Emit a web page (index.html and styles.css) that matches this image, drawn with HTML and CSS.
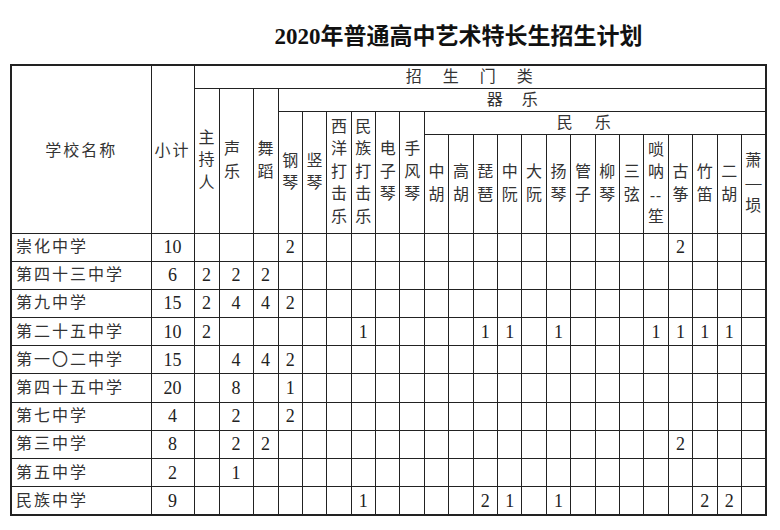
FILE: index.html
```html
<!DOCTYPE html>
<html lang="zh">
<head>
<meta charset="utf-8">
<title>2020年普通高中艺术特长生招生计划</title>
<link rel="stylesheet" href="styles.css">
</head>
<body>
<div class="title">2020年普通高中艺术特长生招生计划</div>
<table class="plan">
<colgroup>
<col class="c-name"><col class="c-sub"><col class="c-host"><col class="c-voc"><col class="c-dance">
<col class="c-ins"><col class="c-ins"><col class="c-ins"><col class="c-ins"><col class="c-ins"><col class="c-ins"><col class="c-ins"><col class="c-ins"><col class="c-ins"><col class="c-ins">
<col class="c-ins"><col class="c-ins"><col class="c-ins"><col class="c-ins"><col class="c-ins"><col class="c-ins"><col class="c-ins"><col class="c-ins"><col class="c-ins"><col class="c-ins">
</colgroup>
<thead>
<tr class="h1">
<th rowspan="4" class="spaced">学校名称</th>
<th rowspan="4" class="spaced">小计</th>
<th colspan="23" class="cat">招生门类</th>
</tr>
<tr class="h2">
<th rowspan="3" class="v">主<br>持<br>人</th>
<th rowspan="3" class="v voc">声<br>乐</th>
<th rowspan="3" class="v">舞<br>蹈</th>
<th colspan="20" class="qi">器乐</th>
</tr>
<tr class="h3">
<th rowspan="2" class="v">钢<br>琴</th>
<th rowspan="2" class="v">竖<br>琴</th>
<th rowspan="2" class="v">西<br>洋<br>打<br>击<br>乐</th>
<th rowspan="2" class="v">民<br>族<br>打<br>击<br>乐</th>
<th rowspan="2" class="v">电<br>子<br>琴</th>
<th rowspan="2" class="v">手<br>风<br>琴</th>
<th colspan="14" class="min">民乐</th>
</tr>
<tr class="h4">
<th class="v">中<br>胡</th>
<th class="v">高<br>胡</th>
<th class="v">琵<br>琶</th>
<th class="v">中<br>阮</th>
<th class="v">大<br>阮</th>
<th class="v">扬<br>琴</th>
<th class="v">管<br>子</th>
<th class="v">柳<br>琴</th>
<th class="v">三<br>弦</th>
<th class="v">唢<br>呐<br><span class="dd">--</span><br>笙</th>
<th class="v">古<br>筝</th>
<th class="v">竹<br>笛</th>
<th class="v">二<br>胡</th>
<th class="v">萧<br>—<br>埙</th>
</tr>
</thead>
<tbody>
<tr><td class="name">崇化中学</td><td>10</td><td></td><td></td><td></td><td>2</td><td></td><td></td><td></td><td></td><td></td><td></td><td></td><td></td><td></td><td></td><td></td><td></td><td></td><td></td><td></td><td>2</td><td></td><td></td><td></td></tr>
<tr><td class="name">第四十三中学</td><td>6</td><td>2</td><td>2</td><td>2</td><td></td><td></td><td></td><td></td><td></td><td></td><td></td><td></td><td></td><td></td><td></td><td></td><td></td><td></td><td></td><td></td><td></td><td></td><td></td><td></td></tr>
<tr><td class="name">第九中学</td><td>15</td><td>2</td><td>4</td><td>4</td><td>2</td><td></td><td></td><td></td><td></td><td></td><td></td><td></td><td></td><td></td><td></td><td></td><td></td><td></td><td></td><td></td><td></td><td></td><td></td><td></td></tr>
<tr><td class="name">第二十五中学</td><td>10</td><td>2</td><td></td><td></td><td></td><td></td><td></td><td>1</td><td></td><td></td><td></td><td></td><td>1</td><td>1</td><td></td><td>1</td><td></td><td></td><td></td><td>1</td><td>1</td><td>1</td><td>1</td><td></td></tr>
<tr><td class="name">第一〇二中学</td><td>15</td><td></td><td>4</td><td>4</td><td>2</td><td></td><td></td><td></td><td></td><td></td><td></td><td></td><td></td><td></td><td></td><td></td><td></td><td></td><td></td><td></td><td></td><td></td><td></td><td></td></tr>
<tr><td class="name">第四十五中学</td><td>20</td><td></td><td>8</td><td></td><td>1</td><td></td><td></td><td></td><td></td><td></td><td></td><td></td><td></td><td></td><td></td><td></td><td></td><td></td><td></td><td></td><td></td><td></td><td></td><td></td></tr>
<tr><td class="name">第七中学</td><td>4</td><td></td><td>2</td><td></td><td>2</td><td></td><td></td><td></td><td></td><td></td><td></td><td></td><td></td><td></td><td></td><td></td><td></td><td></td><td></td><td></td><td></td><td></td><td></td><td></td></tr>
<tr><td class="name">第三中学</td><td>8</td><td></td><td>2</td><td>2</td><td></td><td></td><td></td><td></td><td></td><td></td><td></td><td></td><td></td><td></td><td></td><td></td><td></td><td></td><td></td><td></td><td>2</td><td></td><td></td><td></td></tr>
<tr><td class="name">第五中学</td><td>2</td><td></td><td>1</td><td></td><td></td><td></td><td></td><td></td><td></td><td></td><td></td><td></td><td></td><td></td><td></td><td></td><td></td><td></td><td></td><td></td><td></td><td></td><td></td><td></td></tr>
<tr><td class="name">民族中学</td><td>9</td><td></td><td></td><td></td><td></td><td></td><td></td><td>1</td><td></td><td></td><td></td><td></td><td>2</td><td>1</td><td></td><td>1</td><td></td><td></td><td></td><td></td><td></td><td>2</td><td>2</td><td></td></tr>
</tbody>
</table>
</body>
</html>
```
FILE: styles.css
```css
html, body {
  margin: 0;
  background: #ffffff;
}
body {
  font-family: "Liberation Serif", "Noto Sans CJK SC", serif;
  color: #222222;
}
.title {
  height: 64px;
  box-sizing: border-box;
  padding: 23px 0 0 137px;
  text-align: center;
  font-family: "Liberation Serif", "Noto Sans CJK SC", serif;
  font-size: 23px;
  line-height: 27px;
  font-weight: 700;
  color: #111111;
}
.plan {
  margin-left: 10px;
  width: 755px;
  table-layout: fixed;
  border-collapse: collapse;
  border: 2px solid #222222;
}
.c-name { width: 140px; }
.c-sub { width: 43px; }
.c-host { width: 25px; }
.c-voc { width: 34px; }
.c-dance { width: 25px; }
.c-ins { width: 24.4px; }
.plan th,
.plan td {
  border: 1px solid #222222;
  padding: 0;
  text-align: center;
  vertical-align: middle;
  font-weight: normal;
  overflow: hidden;
}
.plan th {
  font-size: 16px;
  color: #333333;
}
.h1 { height: 23px; }
.h2 { height: 23px; }
.h3 { height: 23px; }
.h4 { height: 99px; }
.spaced { letter-spacing: 2px; }
.cat { letter-spacing: 21px; padding-left: 21px; line-height: 18px; padding-top: 6px; }
.qi { letter-spacing: 19px; padding-left: 19px; line-height: 18px; padding-top: 6px; }
.min { letter-spacing: 22px; padding-left: 22px; line-height: 18px; padding-top: 6px; }
.v {
  line-height: 22.5px;
}
.v.voc { padding-right: 8px; }
.dd { letter-spacing: 1px; font-family: "Liberation Serif", serif; font-size: 15px; font-weight: 700; }
.plan tbody tr { height: 28.2px; }
.plan td {
  font-size: 18px;
  color: #222222;
  line-height: 20px;
}
.plan td.name {
  text-align: left;
  padding-left: 4px;
  font-size: 16px;
  letter-spacing: 2px;
  color: #333333;
}
```
